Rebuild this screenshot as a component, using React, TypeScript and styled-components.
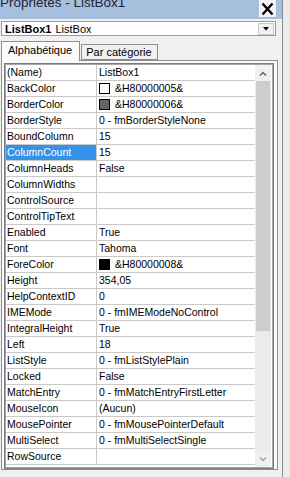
import React from "react";
import styled, { createGlobalStyle } from "styled-components";

const Global = createGlobalStyle`
  html, body { margin: 0; padding: 0; background: #ececec; }
  body { font-family: "Liberation Sans", Arial, sans-serif; overflow: hidden; }
  * { box-sizing: border-box; }
`;

const Window = styled.div`
  width: 283px;
  height: 477px;
  background: #f0f0f0;
  border-right: 1px solid #8a8a8a;
  display: flex;
  flex-direction: column;
  overflow: hidden;
`;

const TitleBar = styled.div`
  height: 19px;
  display: flex;
  align-items: flex-start;
  background: #a6bfdc;
  overflow: hidden;
`;

const TitleText = styled.div`
  flex: 1;
  font-size: 13.5px;
  line-height: 14px;
  margin-top: -4px;
  padding-left: 0;
  color: #1c2530;
  white-space: nowrap;
`;

const CloseBtn = styled.div`
  width: 17px;
  height: 17px;
  margin-right: 6px;
  background: #f4f4f4;
  display: flex;
  align-items: center;
  justify-content: center;
`;

const Content = styled.div`
  padding: 2px 0 0 1px;
  display: flex;
  flex-direction: column;
`;

const Combo = styled.div`
  width: 275px;
  height: 15px;
  background: #fff;
  border: 1px solid #9a9a9a;
  display: flex;
  align-items: center;
  font-size: 11px;
  padding-left: 3px;
`;

const ComboName = styled.span`
  font-weight: bold;
  margin-right: 4px;
`;

const ComboText = styled.span`
  flex: 1;
`;

const DropBtn = styled.div`
  width: 16px;
  height: 12px;
  margin-right: 1px;
  background: #f2f2f2;
  border: 1px solid #c8c8c8;
  display: flex;
  align-items: center;
  justify-content: center;
`;

const TabStrip = styled.div`
  margin-top: 5px;
  height: 19px;
  display: flex;
  align-items: flex-end;
  position: relative;
  z-index: 1;
`;

const Tab = styled.div<{ $active?: boolean }>`
  height: ${(p) => (p.$active ? 20 : 16)}px;
  padding: ${(p) => (p.$active ? "0 7px 0 6px" : "0 5px 0 4px")};
  margin-left: ${(p) => (p.$active ? 0 : 1)}px;
  background: ${(p) => (p.$active ? "#fafafa" : "#f0f0f0")};
  border: 1px solid #8c8e94;
  border-bottom: ${(p) => (p.$active ? "none" : "1px solid #8c8e94")};
  font-size: 11px;
  line-height: ${(p) => (p.$active ? 17 : 14)}px;
  color: #000;
  margin-bottom: ${(p) => (p.$active ? -1 : 0)}px;
`;

const TabPage = styled.div`
  width: 277px;
  height: 410px;
  border: 1px solid #8c8e94;
  background: #fafafa;
  padding: 2px 3px 2px 2px;
`;

const Grid = styled.div`
  height: 406px;
  border: 1px solid #7a7a7a;
  box-shadow: inset 0 0 0 1px #a6a6a6;
  padding: 1px;
  display: flex;
  background: #fff;
`;

const Rows = styled.div`
  width: 249px;
  display: flex;
  flex-direction: column;
`;

const Row = styled.div`
  height: 16px;
  display: flex;
  border-bottom: 1px solid #c9c9c9;
  font-size: 10.5px;
  line-height: 15px;
  color: #000;
`;

const NameCell = styled.div<{ $sel?: boolean }>`
  width: 91px;
  border-right: 1px solid #c9c9c9;
  padding-left: 1px;
  background: ${(p) => (p.$sel ? "#3393e8" : "transparent")};
  color: ${(p) => (p.$sel ? "#fff" : "#000")};
  white-space: nowrap;
  overflow: hidden;
`;

const ValueCell = styled.div`
  flex: 1;
  padding-left: 2px;
  display: flex;
  align-items: center;
  white-space: nowrap;
  overflow: hidden;
`;

const Swatch = styled.span<{ $c: string }>`
  width: 11px;
  height: 11px;
  border: 1px solid #000;
  background: ${(p) => p.$c};
  margin-right: 5px;
  flex: none;
`;

const ScrollBar = styled.div`
  width: 16px;
  display: flex;
  flex-direction: column;
  background: #ebebeb;
`;

const ScrollArrow = styled.div`
  height: 16px;
  display: flex;
  align-items: center;
  justify-content: center;
  background: #f0f0f0;
`;

const Thumb = styled.div`
  height: 250px;
  margin: 0 1px;
  background: #cdcdcd;
`;

const Track = styled.div`
  flex: 1;
`;

type P = { n: string; v: string; sw?: string; sel?: boolean };

const rows: P[] = [
  { n: "(Name)", v: "ListBox1" },
  { n: "BackColor", v: "&H80000005&", sw: "#ffffff" },
  { n: "BorderColor", v: "&H80000006&", sw: "#646464" },
  { n: "BorderStyle", v: "0 - fmBorderStyleNone" },
  { n: "BoundColumn", v: "15" },
  { n: "ColumnCount", v: "15", sel: true },
  { n: "ColumnHeads", v: "False" },
  { n: "ColumnWidths", v: "" },
  { n: "ControlSource", v: "" },
  { n: "ControlTipText", v: "" },
  { n: "Enabled", v: "True" },
  { n: "Font", v: "Tahoma" },
  { n: "ForeColor", v: "&H80000008&", sw: "#000000" },
  { n: "Height", v: "354,05" },
  { n: "HelpContextID", v: "0" },
  { n: "IMEMode", v: "0 - fmIMEModeNoControl" },
  { n: "IntegralHeight", v: "True" },
  { n: "Left", v: "18" },
  { n: "ListStyle", v: "0 - fmListStylePlain" },
  { n: "Locked", v: "False" },
  { n: "MatchEntry", v: "0 - fmMatchEntryFirstLetter" },
  { n: "MouseIcon", v: "(Aucun)" },
  { n: "MousePointer", v: "0 - fmMousePointerDefault" },
  { n: "MultiSelect", v: "0 - fmMultiSelectSingle" },
  { n: "RowSource", v: "" },
];

export default function App() {
  return (
    <>
      <Global />
      <Window>
        <TitleBar>
          <TitleText>Propriétés - ListBox1</TitleText>
          <CloseBtn>
            <svg width="13" height="14" viewBox="0 0 13 14">
              <path d="M1.5 1.5 L11.5 12.5 M11.5 1.5 L1.5 12.5" stroke="#000" strokeWidth="2.4" />
            </svg>
          </CloseBtn>
        </TitleBar>
        <Content>
          <Combo>
            <ComboName>ListBox1</ComboName>
            <ComboText>ListBox</ComboText>
            <DropBtn>
              <svg width="6" height="4" viewBox="0 0 6 4">
                <path d="M0 0 H6 L3 3.5 Z" fill="#000" />
              </svg>
            </DropBtn>
          </Combo>
          <TabStrip>
            <Tab $active>Alphabétique</Tab>
            <Tab>Par catégorie</Tab>
          </TabStrip>
          <TabPage>
            <Grid>
              <Rows>
                {rows.map((r) => (
                  <Row key={r.n}>
                    <NameCell $sel={r.sel}>{r.n}</NameCell>
                    <ValueCell>
                      {r.sw && <Swatch $c={r.sw} />}
                      {r.v}
                    </ValueCell>
                  </Row>
                ))}
              </Rows>
              <ScrollBar>
                <ScrollArrow>
                  <svg width="8" height="5" viewBox="0 0 8 5">
                    <path d="M1 4.5 L4 1.5 L7 4.5" stroke="#606060" strokeWidth="1.4" fill="none" />
                  </svg>
                </ScrollArrow>
                <Thumb />
                <Track />
                <ScrollArrow>
                  <svg width="8" height="5" viewBox="0 0 8 5">
                    <path d="M1 0.5 L4 3.5 L7 0.5" stroke="#a0a0a0" strokeWidth="1.4" fill="none" />
                  </svg>
                </ScrollArrow>
              </ScrollBar>
            </Grid>
          </TabPage>
        </Content>
      </Window>
    </>
  );
}
